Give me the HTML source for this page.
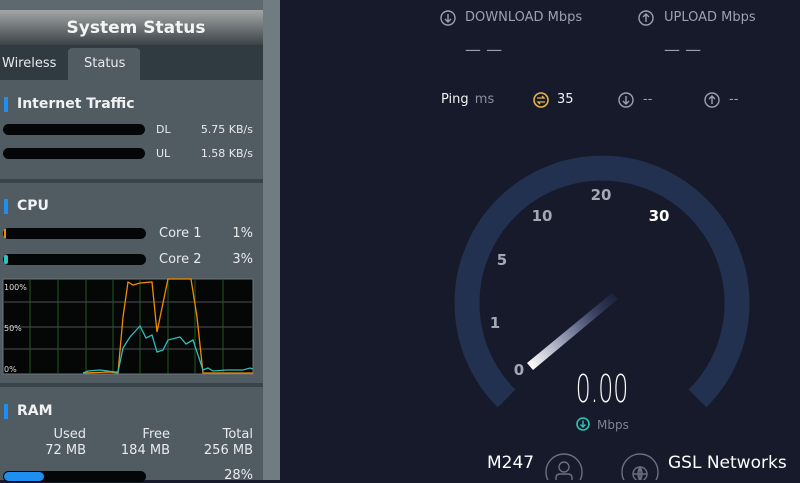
<!DOCTYPE html>
<html><head><meta charset="utf-8"><style>
*{margin:0;padding:0;box-sizing:border-box}
body{width:800px;height:480px;overflow:hidden;background:#161a2b;position:relative;font-family:"DejaVu Sans","Liberation Sans",sans-serif}
.a{position:absolute;white-space:nowrap}
#lp{position:absolute;left:0;top:0;width:263px;height:480px;background:#515c62}
#strip{position:absolute;left:263px;top:0;width:17px;height:480px;background:#717c82}
.bar{position:absolute;height:11px;background:#050607;border-radius:6px}
.t{color:#e8eaeb;font-size:13px}
.h{color:#f0f2f3;font-size:14px;font-weight:bold;font-family:"DejaVu Sans",sans-serif}
.mk{position:absolute;left:4px;width:4px;height:15px;background:#1e8ff0}
.r{text-align:right}
.g{color:#9ca1b2;font-size:13px;font-family:"DejaVu Sans",sans-serif}
.gl{fill:#a4a8b4;font-size:15px;font-weight:bold;font-family:"DejaVu Sans",sans-serif}
</style></head><body>
<div id="lp"></div><div id="strip"></div>
<div class="a" style="left:0;top:0;width:263px;height:10px;background:#5e696f"></div>
<div class="a" style="left:0;top:10px;width:263px;height:35px;background:linear-gradient(#a2a6a6,#6a7072 55%,#3c4346)"></div>
<div class="a" style="left:0;top:18px;width:272px;text-align:center;color:#f4f4f4;font-size:17px;font-weight:bold;font-family:'DejaVu Sans',sans-serif">System Status</div>
<div class="a" style="left:0;top:45px;width:263px;height:35px;background:#2f3b41"></div>
<div class="a" style="left:68px;top:48px;width:72px;height:32px;background:#515c62;border-radius:4px 4px 0 0"></div>
<div class="a t" style="left:2px;top:56px;font-size:13px">Wireless</div>
<div class="a t" style="left:84px;top:56px;font-size:13px">Status</div>

<div class="mk" style="top:97px"></div><div class="a h" style="left:17px;top:96px">Internet Traffic</div>
<div class="bar" style="left:3px;top:124px;width:142px"></div>
<div class="bar" style="left:3px;top:148px;width:142px"></div>
<div class="a t" style="left:156px;top:123px;font-size:11px">DL</div>
<div class="a t" style="left:156px;top:147px;font-size:11px">UL</div>
<div class="a t r" style="left:0;width:253px;top:123px;font-size:11px">5.75 KB/s</div>
<div class="a t r" style="left:0;width:253px;top:147px;font-size:11px">1.58 KB/s</div>
<div class="a" style="left:0;top:179px;width:263px;height:4px;background:#3a4448"></div>

<div class="mk" style="top:199px"></div><div class="a h" style="left:17px;top:198px">CPU</div>
<div class="bar" style="left:3px;top:228px;width:143px"></div>
<div class="a" style="left:4px;top:229px;width:2px;height:9px;background:#f08a00"></div>
<div class="bar" style="left:3px;top:254px;width:143px"></div>
<div class="a" style="left:4px;top:255px;width:4px;height:9px;background:#30c0c0;border-radius:3px"></div>
<div class="a t" style="left:159px;top:226px">Core 1</div>
<div class="a t" style="left:159px;top:252px">Core 2</div>
<div class="a t r" style="left:0;width:253px;top:226px">1%</div>
<div class="a t r" style="left:0;width:253px;top:252px">3%</div>
<div class="a" style="left:0;top:383px;width:263px;height:4px;background:#3a4448"></div>

<div class="mk" style="top:404px"></div><div class="a h" style="left:17px;top:403px">RAM</div>
<div class="a t r" style="left:0;width:86px;top:427px;line-height:16px">Used<br>72 MB</div>
<div class="a t r" style="left:0;width:170px;top:427px;line-height:16px">Free<br>184 MB</div>
<div class="a t r" style="left:0;width:253px;top:427px;line-height:16px">Total<br>256 MB</div>
<div class="bar" style="left:3px;top:471px;width:143px"></div>
<div class="a" style="left:4px;top:472px;width:40px;height:9px;background:#1e8ff0;border-radius:5px"></div>
<div class="a t r" style="left:0;width:253px;top:468px">28%</div>

<svg class="a" style="left:0;top:0" width="800" height="480" viewBox="0 0 800 480">
<defs><linearGradient id="nd" x1="530" y1="367" x2="617" y2="297" gradientUnits="userSpaceOnUse"><stop offset="0" stop-color="#fff"/><stop offset="0.55" stop-color="#6a7090"/><stop offset="1" stop-color="#2a3560" stop-opacity="0.3"/></linearGradient></defs>
<rect x="3" y="279" width="250" height="95" fill="#050606" stroke="#6b7478"/>
<g stroke="#1f5a1f" stroke-width="1"><path d="M30 279V374M58 279V374M86 279V374M113 279V374M140 279V374M168 279V374M195 279V374M223 279V374"/></g>
<g stroke="#3d4448" stroke-width="1.2"><path d="M3 302H253M3 327H253M3 349H253"/></g>
<text x="4" y="290" fill="#ddd" font-size="8">100%</text><text x="4" y="331" fill="#ddd" font-size="8">50%</text><text x="4" y="372" fill="#ddd" font-size="8">0%</text>
<polyline fill="none" stroke="#f08c00" stroke-width="1.3" points="83,373 110,372 118,373 123,317 128,282 133,285 140,283 152,282 157,332 163,303 168,279 191,279 197,317 203,373 233,373 253,373"/>
<polyline fill="none" stroke="#30bcbc" stroke-width="1.3" points="83,373 88,371 100,370 115,372 118,372 123,348 130,337 140,326 146,338 152,335 157,352 163,350 168,340 180,337 186,344 193,340 203,370 208,368 213,371 227,370 243,370 250,368 253,369"/>

<path d="M506.5 398.5 A135 135 0 1 1 697.5 398.5" fill="none" stroke="#22314f" stroke-width="25"/>
<polygon points="527,363 533,370 618,299 612,293" fill="url(#nd)"/>
<text x="519" y="375" class="gl" text-anchor="middle">0</text>
<text x="495" y="328" class="gl" text-anchor="middle">1</text>
<text x="502" y="265" class="gl" text-anchor="middle">5</text>
<text x="542" y="221" class="gl" text-anchor="middle">10</text>
<text x="601" y="200" class="gl" text-anchor="middle">20</text>
<text x="659" y="221" class="gl" text-anchor="middle" style="fill:#fff">30</text>
<text x="602" y="402" fill="#fff" font-size="38" font-family="DejaVu Sans" font-weight="200" text-anchor="middle" transform="translate(602 0) scale(0.62 1) translate(-602 0)">0.00</text>
<circle cx="583" cy="424" r="6" fill="none" stroke="#2ec4b6" stroke-width="1.6"/><path d="M583 420.5V427M580.5 424.5L583 427L585.5 424.5" fill="none" stroke="#2ec4b6" stroke-width="1.4"/>
<text x="597" y="429" fill="#7c8194" font-size="12" font-family="DejaVu Sans">Mbps</text>
<g fill="none" stroke="#9ca1b2" stroke-width="1.4">
<circle cx="448" cy="18" r="7"/><path d="M448 14V22M445 19L448 22L451 19"/>
<circle cx="646" cy="18" r="7"/><path d="M646 22V14M643 17L646 14L649 17"/>
<circle cx="626" cy="100" r="7"/><path d="M626 96V104M623 101L626 104L629 101"/>
<circle cx="712" cy="100" r="7"/><path d="M712 104V96M709 99L712 96L715 99"/>
</g>
<circle cx="541" cy="100" r="7" fill="none" stroke="#e8b446" stroke-width="1.6"/><path d="M537 98H544L542 96M545 102H538L540 104" fill="none" stroke="#e8b446" stroke-width="1.3"/>
<g fill="none" stroke="#6a7082" stroke-width="1.4">
<circle cx="564" cy="472" r="18"/><circle cx="564" cy="467" r="5"/><path d="M556 482V478Q556 474 560 474H568Q572 474 572 478V482"/>
<circle cx="640" cy="472" r="18"/><circle cx="640" cy="474" r="7"/><path d="M633 474H647M640 467V481M640 467Q636 474 640 481M640 467Q644 474 640 481"/>
</g>
</svg>
<div class="a g" style="left:465px;top:10px">DOWNLOAD Mbps</div>
<div class="a g" style="left:664px;top:10px">UPLOAD Mbps</div>
<div class="a g" style="left:465px;top:40px;font-size:16px">— —</div>
<div class="a g" style="left:664px;top:40px;font-size:16px">— —</div>
<div class="a" style="left:441px;top:92px;color:#f2f2f4;font-size:13px">Ping <span style="color:#8a8fa0;margin-left:2px">ms</span></div>
<div class="a" style="left:557px;top:92px;color:#f2f2f4;font-size:13px">35</div>
<div class="a g" style="left:643px;top:92px">--</div>
<div class="a g" style="left:729px;top:92px">--</div>
<div class="a" style="left:487px;top:453px;color:#fff;font-size:17px">M247</div>
<div class="a" style="left:668px;top:453px;color:#fff;font-size:17px">GSL Networks</div>
</body></html>
